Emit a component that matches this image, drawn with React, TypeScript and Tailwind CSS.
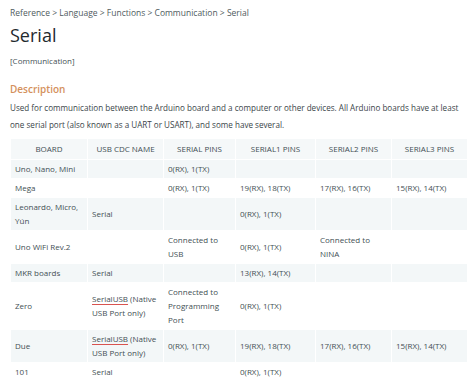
import React from "react";

type Row = {
  board: string;
  cdc?: React.ReactNode;
  s0?: string;
  s1?: string;
  s2?: string;
  s3?: string;
};

const Squiggle = ({ children }: { children: React.ReactNode }) => (
  <span className="underline decoration-[#d9534f] decoration-1 underline-offset-2">{children}</span>
);

const rows: Row[] = [
  { board: "Uno, Nano, Mini", s0: "0(RX), 1(TX)" },
  { board: "Mega", s0: "0(RX), 1(TX)", s1: "19(RX), 18(TX)", s2: "17(RX), 16(TX)", s3: "15(RX), 14(TX)" },
  { board: "Leonardo, Micro, Yún", cdc: "Serial", s1: "0(RX), 1(TX)" },
  { board: "Uno WiFi Rev.2", s0: "Connected to USB", s1: "0(RX), 1(TX)", s2: "Connected to NINA" },
  { board: "MKR boards", cdc: "Serial", s1: "13(RX), 14(TX)" },
  {
    board: "Zero",
    cdc: (
      <>
        <Squiggle>SerialUSB</Squiggle> (Native USB Port only)
      </>
    ),
    s0: "Connected to Programming Port",
    s1: "0(RX), 1(TX)",
  },
  {
    board: "Due",
    cdc: (
      <>
        <Squiggle>SerialUSB</Squiggle> (Native USB Port only)
      </>
    ),
    s0: "0(RX), 1(TX)",
    s1: "19(RX), 18(TX)",
    s2: "17(RX), 16(TX)",
    s3: "15(RX), 14(TX)",
  },
  { board: "101", cdc: "Serial", s1: "0(RX), 1(TX)" },
];

const headers = ["BOARD", "USB CDC NAME", "SERIAL PINS", "SERIAL1 PINS", "SERIAL2 PINS", "SERIAL3 PINS"];
const widths = ["w-[77px]", "w-[76px]", "w-[72px]", "w-[80px]", "w-[76px]", "w-[76px]"];

function App() {
  return (
    <div className="min-h-[387px] bg-white px-[10px] pt-[5px] font-['Open_Sans',sans-serif] text-[#434f54]">
      <div className="text-[8.5px] leading-[16px] text-[#4f5b60]">
        Reference &gt; Language &gt; Functions &gt; Communication &gt; Serial
      </div>
      <h1 className="mt-[2px] text-[18px] leading-[24px] text-[#1f2a2e]">Serial</h1>
      <div className="mt-[7px] text-[8px] leading-[14px]">[Communication]</div>
      <h2 className="mt-[14px] text-[10px] font-semibold leading-[14px] text-[#d4915c]">Description</h2>
      <p className="mt-[3px] whitespace-nowrap text-[8.1px] leading-[17px] text-[#3a4549]">
        Used for communication between the Arduino board and a computer or other devices. All Arduino boards have at least
        <br />
        one serial port (also known as a UART or USART), and some have several.
      </p>
      <table className="mt-[5px] w-[457px] table-fixed border-collapse border border-[#e6ebed] text-[8px] leading-[14px] text-[#434f54]">
        <thead>
          <tr className="bg-[#f5f8f9]">
            {headers.map((h, i) => (
              <th key={h} className={`${widths[i]} h-[21px] border border-white px-1 text-center font-normal`}>
                {h}
              </th>
            ))}
          </tr>
        </thead>
        <tbody>
          {rows.map((r, i) => (
            <tr key={r.board} className={i % 2 === 0 ? "bg-[#f3f7f8]" : "bg-white"}>
              {[r.board, r.cdc, r.s0, r.s1, r.s2, r.s3].map((c, j) => (
                <td key={j} className="h-[19px] border border-white px-[4px] py-[2px] align-middle">
                  {c}
                </td>
              ))}
            </tr>
          ))}
        </tbody>
      </table>
    </div>
  );
}

export default App;
